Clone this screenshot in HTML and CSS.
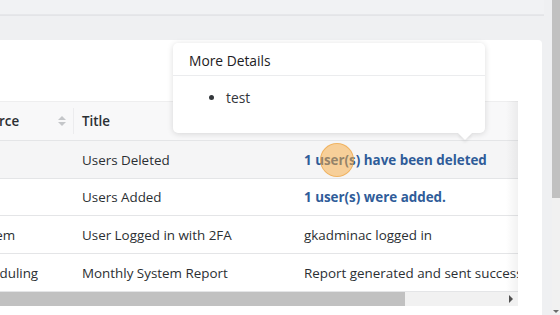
FILE: index.html
```html
<!DOCTYPE html>
<html>
<head>
<meta charset="utf-8">
<link rel="stylesheet" href="styles.css">
</head>
<body>
<div class="app">
  <div class="main">
    <div class="topbar"></div>
    <div class="content">
      <div class="card">
        <div class="table-wrap">
          <table class="grid">
            <thead>
              <tr>
                <th class="c1"><div class="th-in"><span>Source</span><span class="sort"><i class="up"></i><i class="down"></i></span></div></th>
                <th class="c2"><div class="th-in div">Title</div></th>
                <th class="c3"><div class="th-in">Description</div></th>
              </tr>
            </thead>
            <tbody>
              <tr class="odd">
                <td class="c1">API</td>
                <td class="c2">Users Deleted</td>
                <td class="c3"><a class="lnk">1 user(s) have been deleted</a></td>
              </tr>
              <tr>
                <td class="c1">API</td>
                <td class="c2">Users Added</td>
                <td class="c3"><a class="lnk">1 user(s) were added.</a></td>
              </tr>
              <tr>
                <td class="c1">System</td>
                <td class="c2">User Logged in with 2FA</td>
                <td class="c3">gkadminac logged in</td>
              </tr>
              <tr>
                <td class="c1">Scheduling</td>
                <td class="c2">Monthly System Report</td>
                <td class="c3">Report generated and sent successfully</td>
              </tr>
            </tbody>
          </table>
          <div class="hscroll">
            <div class="hthumb"></div>
            <div class="htrack"><i class="harrow"></i></div>
          </div>
        </div>
      </div>
    </div>
  </div>
  <div class="vscroll"><div class="vthumb"></div><div class="vtrack"><i class="varrow"></i></div></div>
</div>

<div class="popover">
  <div class="pop-head">More Details</div>
  <div class="pop-body">
    <ul><li>test</li></ul>
  </div>
  <i class="pop-arrow"></i>
</div>

<div class="click-dot"></div>
</body>
</html>
```
FILE: styles.css
```css
* { box-sizing: border-box; }
html, body { margin: 0; padding: 0; }
body {
  width: 560px;
  height: 315px;
  overflow: hidden;
  background: #eff0f2;
  font-family: "Open Sans", "Noto Sans", sans-serif;
  font-size: 13.4px;
  color: #2b2f33;
}
.app { display: flex; height: 315px; }
.main { flex: 1; min-width: 0; }
.topbar {
  height: 16px;
  background: #f1f2f4;
  border-bottom: 1px solid #e3e4e7;
  margin-right: 8px;
  box-shadow: 0 -5px 0 -4px #e6e7ea inset;
}
.content { padding-top: 24px; }
.card {
  background: #fff;
  margin-right: 10px;
  padding: 61px 24px 0 0;
  height: 275px;
  border-top-right-radius: 4px;
}
.table-wrap { overflow: hidden; position: relative; }
.table-wrap::after {
  content: "";
  position: absolute;
  right: 0; top: 0; bottom: 14px;
  width: 12px;
  background: linear-gradient(to left, rgba(0,0,0,0.05), rgba(0,0,0,0));
}
.grid {
  border-collapse: collapse;
  margin-left: -39px;
  width: 647px;
  table-layout: fixed;
  white-space: nowrap;
}
.grid .c1 { width: 112px; }
.grid .c2 { width: 222px; }
.grid .c3 { width: 313px; }
.grid th, .grid td {
  text-align: left;
  padding: 0 9px;
  overflow: hidden;
}
.grid thead tr { background: #f8f8f9; height: 39px; border-top: 1px solid #eeeeef; }
.grid th { font-weight: 600; padding: 0; }
.th-in { display: flex; align-items: center; justify-content: space-between; padding: 0 9px 0 14px; height: 26px; }
.th-in.div { border-left: 1px solid #ececee; justify-content: flex-start; padding-left: 8px; }
.grid thead .c1 .th-in { padding-right: 7px; }
.sort { display: flex; flex-direction: column; gap: 2px; }
.sort i { display: block; width: 0; height: 0; border-left: 4px solid transparent; border-right: 4px solid transparent; }
.sort .up { border-bottom: 4px solid #c4c6c9; }
.sort .down { border-top: 4px solid #c4c6c9; }
.grid tbody tr { height: 38px; border-top: 1px solid #e4e5e7; }
.grid tbody tr:nth-child(2) { height: 37px; }
.grid tbody tr.odd { background: #f5f5f6; }
.grid tbody tr:last-child { border-bottom: 1px solid #e4e5e7; }
.lnk { color: #2f5c99; font-weight: 700; text-decoration: none; }

.hscroll { display: flex; height: 14px; background: #f1f1f1; }
.hthumb { width: 405px; background: #c1c1c1; }
.htrack { flex: 1; display: flex; align-items: center; justify-content: flex-end; padding-right: 5px; }
.harrow { display: block; width: 0; height: 0; border-top: 4px solid transparent; border-bottom: 4px solid transparent; border-left: 4px solid #505050; }

.vscroll { width: 8px; display: flex; flex-direction: column; background: #f1f1f1; }
.vthumb { height: 198px; background: #c1c1c1; }
.vtrack { flex: 1; display: flex; align-items: flex-end; justify-content: center; padding-bottom: 2px; }
.varrow { display: block; width: 0; height: 0; border-left: 3px solid transparent; border-right: 3px solid transparent; border-top: 3px solid #6b6b6b; }

.popover {
  position: absolute;
  left: 173px; top: 43px;
  width: 312px; height: 90px;
  background: #fff;
  border-radius: 5px;
  box-shadow: 0 1px 6px rgba(0,0,0,0.14);
}
.pop-head {
  height: 33px;
  padding: 8px 16px 0;
  font-size: 13.8px;
  font-weight: 500;
  color: #1d2023;
  border-bottom: 1px solid #ebecee;
}
.pop-body { padding: 12px 16px 0; font-size: 13.8px; color: #33373b; }
.pop-body ul { margin: 0; padding-left: 37px; line-height: 20px; }
.pop-arrow {
  position: absolute;
  left: 287px; bottom: -5px;
  width: 10px; height: 10px;
  background: #fff;
  transform: rotate(45deg);
  box-shadow: 2px 2px 3px rgba(0,0,0,0.07);
}

.click-dot {
  position: absolute;
  left: 320px; top: 143px;
  width: 34px; height: 34px;
  border-radius: 50%;
  background: rgba(250, 170, 60, 0.5);
  border: 1px solid rgba(235, 160, 60, 0.6);
}
```
